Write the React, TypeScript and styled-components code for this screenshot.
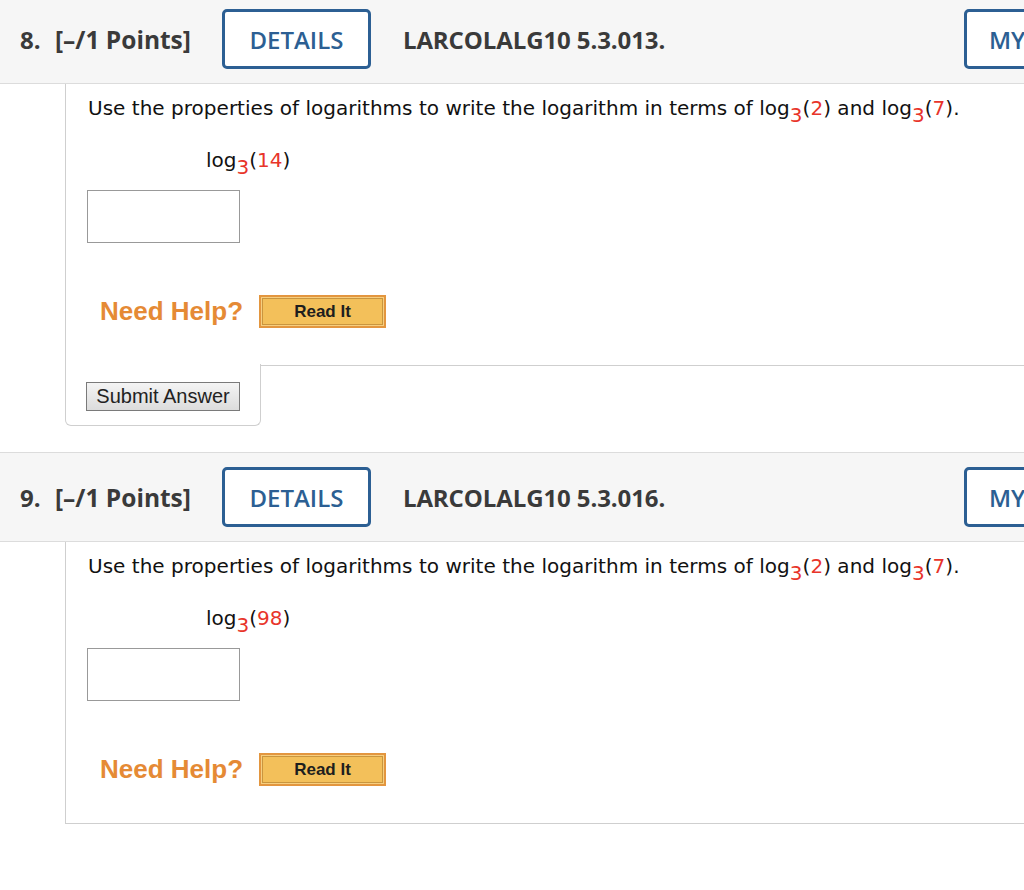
import React from "react";
import styled, { createGlobalStyle } from "styled-components";

const Global = createGlobalStyle`
  html, body { margin: 0; padding: 0; background: #ffffff; }
  body { font-family: "DejaVu Sans", Verdana, sans-serif; overflow: hidden; }
`;

const Page = styled.div`
  margin-top: -6px;
  width: 1024px;
  overflow: hidden;
`;

const Question = styled.section<{ $gap?: number }>`
  margin-bottom: ${(p) => p.$gap ?? 0}px;
`;

const Header = styled.div`
  height: 88px;
  display: flex;
  align-items: center;
  background: #f6f6f6;
  border-top: 1px solid #dcdcdc;
  border-bottom: 1px solid #dcdcdc;
  padding-left: 20px;
  font-family: "Open Sans", sans-serif;
  color: #3a3a3a;
  white-space: nowrap;
`;

const Num = styled.span`
  font-size: 24px;
  font-weight: 700;
  width: 35px;
`;

const Points = styled.span`
  font-size: 24.5px;
  font-weight: 700;
  margin-right: 31px;
`;

const OutlineButton = styled.button<{ $align: "center" | "left" }>`
  flex: none;
  height: 60px;
  box-sizing: border-box;
  border: 3px solid #2c5f93;
  border-radius: 5px;
  background: #ffffff;
  color: #2c5f93;
  font-family: "Open Sans", sans-serif;
  font-size: 24px;
  font-weight: 600;
  text-align: ${(p) => p.$align};
  cursor: pointer;
`;

const DetailsButton = styled(OutlineButton)`
  width: 149px;
  padding: 0;
`;

const NotesButton = styled(OutlineButton)`
  width: 140px;
  margin-right: -80px;
  padding: 0 0 0 22px;
`;

const Code = styled.span`
  font-size: 24px;
  font-weight: 700;
  letter-spacing: -0.1px;
  margin-left: 32px;
  flex: 1;
`;

const Body = styled.div<{ $h: number }>`
  position: relative;
  height: ${(p) => p.$h}px;
  margin-left: 65px;
  border-left: 1px solid #cfcfcf;
  border-bottom: 1px solid #cfcfcf;
  padding: 12px 0 0 22px;
  box-sizing: border-box;
  background: #fff;
  font-family: "DejaVu Sans", Verdana, sans-serif;
  color: #111;
`;

const Prompt = styled.p`
  margin: 0;
  font-size: 20px;
  line-height: 24px;
  letter-spacing: 0.02px;
  white-space: nowrap;
`;

const Red = styled.span`
  color: #e8342a;
`;

const Sub = styled.sub`
  font-size: 20px;
  line-height: 0;
  vertical-align: -7px;
  color: #e8342a;
`;

const Expr = styled.p`
  margin: 28px 0 0 118px;
  font-size: 20px;
  line-height: 24px;
`;

const AnswerBox = styled.input`
  display: block;
  margin: 18px 0 0 -1px;
  width: 153px;
  height: 53px;
  box-sizing: border-box;
  border: 1px solid #999;
  background: #fff;
`;

const HelpRow = styled.div`
  display: flex;
  align-items: center;
  margin: 52px 0 0 12px;
  gap: 16px;
`;

const NeedHelp = styled.span`
  font-family: "Liberation Sans", Arial, sans-serif;
  font-weight: 700;
  font-size: 26px;
  color: #e58a35;
`;

const ReadIt = styled.button`
  width: 127px;
  height: 33px;
  box-sizing: border-box;
  background: #f3c05a;
  border: 2px solid #e3963f;
  box-shadow: inset 0 0 0 1px #f6cf80, inset 0 0 0 2px #c9953f;
  font-family: "Liberation Sans", Arial, sans-serif;
  font-weight: 700;
  font-size: 17px;
  color: #1e1e1e;
  padding: 0;
`;

const SubmitTab = styled.div`
  position: absolute;
  left: -1px;
  top: 100%;
  width: 196px;
  height: 62px;
  box-sizing: border-box;
  background: #fff;
  border: 1px solid #cfcfcf;
  border-top: none;
  border-radius: 0 0 6px 6px;
  margin-top: -1px;
  padding: 18px 0 0 20px;
`;

const SubmitButton = styled.button`
  width: 154px;
  height: 29px;
  box-sizing: border-box;
  border: 1px solid #7a7a7a;
  background: linear-gradient(#f4f4f4, #dcdcdc);
  font-family: "Liberation Sans", Arial, sans-serif;
  font-size: 20px;
  color: #222;
  padding: 0;
`;

function LogText({ n }: { n: string }) {
  return (
    <>
      log<Sub>3</Sub>(<Red>{n}</Red>)
    </>
  );
}

function Q({
  num,
  code,
  arg,
  bodyH,
  submit,
  gap,
}: {
  num: string;
  code: string;
  arg: string;
  bodyH: number;
  submit?: boolean;
  gap?: number;
}) {
  return (
    <Question $gap={gap}>
      <Header>
        <Num>{num}</Num>
        <Points>[–/1 Points]</Points>
        <DetailsButton $align="center">DETAILS</DetailsButton>
        <Code>{code}</Code>
        <NotesButton $align="left">MY NOTES</NotesButton>
      </Header>
      <Body $h={bodyH}>
        <Prompt>
          Use the properties of logarithms to write the logarithm in terms of <LogText n="2" /> and{" "}
          <LogText n="7" />.
        </Prompt>
        <Expr>
          <LogText n={arg} />
        </Expr>
        <AnswerBox type="text" aria-label="answer" />
        <HelpRow>
          <NeedHelp>Need Help?</NeedHelp>
          <ReadIt>Read It</ReadIt>
        </HelpRow>
        {submit && (
          <SubmitTab>
            <SubmitButton>Submit Answer</SubmitButton>
          </SubmitTab>
        )}
      </Body>
    </Question>
  );
}

export default function App() {
  return (
    <Page>
      <Global />
      <Q num="8." code="LARCOLALG10 5.3.013." arg="14" bodyH={282} submit gap={86} />
      <Q num="9." code="LARCOLALG10 5.3.016." arg="98" bodyH={282} />
    </Page>
  );
}
